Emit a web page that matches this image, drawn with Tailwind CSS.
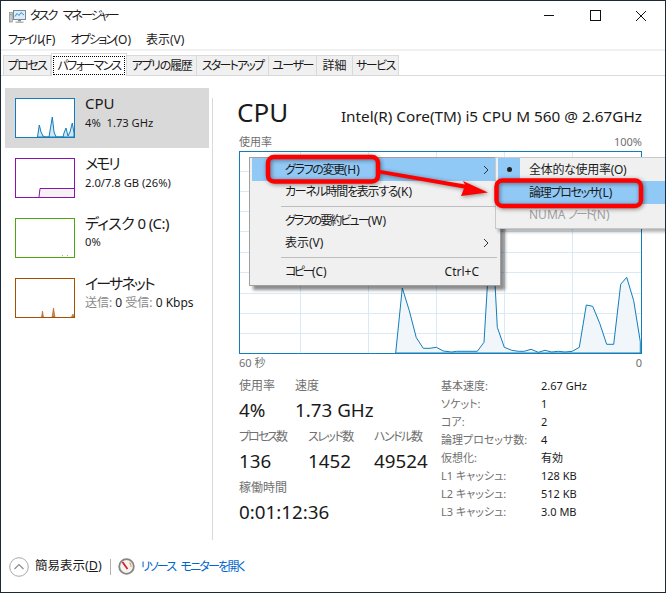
<!DOCTYPE html>
<html lang="ja">
<head>
  <meta charset="UTF-8" />
  <title>タスク マネージャー</title>
  <script src="https://cdn.jsdelivr.net/npm/@tailwindcss/browser@4"></script>
</head>
<body class="bg-white overflow-hidden">
  <div class="relative w-[666px] h-[593px] overflow-hidden bg-white border border-[#1c2a38] text-[12px] text-[#1a1a1a] font-['Noto_Sans','Noto_Sans_CJK_JP',sans-serif] [font-feature-settings:'palt']">

    <!-- title bar -->
    <header class="h-[29px] flex items-center pl-[8px]">
      <svg class="w-[17px] h-[17px]" viewBox="0 0 17 17">
        <rect x="0.5" y="5.500" width="2.800" height="9.500" fill="#c9c9c9" stroke="#8a8a8a" stroke-width="0.7"/>
        <rect x="1.300" y="7" width="1.200" height="1.200" fill="#5fb04a"/>
        <rect x="4.500" y="3.500" width="12" height="9" fill="#dcecfa" stroke="#7d8a96"/>
        <path d="M6 9.500l2-3 2 2 2-3 3 2.500" fill="none" stroke="#3b8ed0"/>
        <rect x="9" y="13" width="3" height="1.500" fill="#8a8a8a"/><rect x="6.500" y="14.500" width="8" height="1.500" fill="#b5b5b5"/>
      </svg>
      <span class="ml-[4px] tracking-[-1.900px] [word-spacing:5px]">タスク マネージャー</span>
      <div class="ml-auto flex items-center">
        <svg class="w-[46px] h-[29px]" viewBox="0 0 46 29"><path d="M18 14.5h10" stroke="#111"/></svg>
        <svg class="w-[46px] h-[29px]" viewBox="0 0 46 29"><rect x="18.5" y="9.5" width="10" height="10" fill="none" stroke="#111"/></svg>
        <svg class="w-[46px] h-[29px] mr-[1px]" viewBox="0 0 46 29"><path d="M18 10l10 10M28 10l-10 10" stroke="#111"/></svg>
      </div>
    </header>

    <!-- menu bar -->
    <nav class="h-[19px] flex items-center pl-[7px] gap-[15px]">
      <span><span class="tracking-[-1.900px]">ファイル</span>(F)</span><span><span class="tracking-[-1.750px]">オプション</span>(O)</span><span>表示(V)</span>
    </nav>
    <div class="h-[2px] bg-[#f0f0f0]"></div>

    <!-- tabs -->
    <div class="relative h-[25px] flex items-end pl-[2px] border-b border-[#d9d9d9] whitespace-nowrap">
      <div class="h-[20px] w-[48px] flex items-center justify-center bg-[#f0f0f0] border border-b-0 border-[#d9d9d9] tracking-[-1.500px]">プロセス</div>
      <div class="relative z-10 -mb-[1px] h-[23px] w-[76px] flex items-center justify-center bg-white border border-b-0 border-[#d9d9d9]">
        <span class="w-[72px] text-center leading-[19px] outline-1 outline-dotted outline-black -outline-offset-1 tracking-[-1.600px]">パフォーマンス</span>
      </div>
      <div class="h-[20px] w-[70px] flex items-center justify-center bg-[#f0f0f0] border border-l-0 border-b-0 border-[#d9d9d9] tracking-[-1.300px]">アプリの履歴</div>
      <div class="h-[20px] w-[72px] flex items-center justify-center bg-[#f0f0f0] border border-l-0 border-b-0 border-[#d9d9d9] tracking-[-1.800px]">スタートアップ</div>
      <div class="h-[20px] w-[48px] flex items-center justify-center bg-[#f0f0f0] border border-l-0 border-b-0 border-[#d9d9d9] tracking-[-1.500px]">ユーザー</div>
      <div class="h-[20px] w-[36px] flex items-center justify-center bg-[#f0f0f0] border border-l-0 border-b-0 border-[#d9d9d9]">詳細</div>
      <div class="h-[20px] w-[46px] flex items-center justify-center bg-[#f0f0f0] border border-l-0 border-b-0 border-[#d9d9d9] tracking-[-1.500px]">サービス</div>
    </div>

    <div class="h-[464px] flex">
      <!-- sidebar -->
      <aside class="w-[211px] pt-[12px] pl-[4px] shrink-0">
        <div class="w-[204px] h-[60px] flex items-start pt-[10px] bg-[#d9d9d9] pl-[10px]">
          <svg class="w-[60px] h-[40px] bg-white border border-[#117dbb]" viewBox="0 0 58 38">
            <path d="M21.500 38L23.300 26 25 33 27 37 29 38H33L36.300 18 38 33 40 38H47L48 34 50 29 52 37 54 33 56.300 24 58 34V38z" fill="#d3e7f4" stroke="#117dbb" stroke-width="1"/>
          </svg>
          <div class="ml-[10px] -mt-[5px]">
            <div class="text-[15px] leading-[21px]">CPU</div>
            <div class="leading-[18px] text-[11.200px]">4%&nbsp; 1.73 GHz</div>
          </div>
        </div>
        <div class="w-[204px] h-[60px] flex items-start pt-[10px] pl-[10px]">
          <svg class="w-[60px] h-[40px] bg-white border border-[#8b12ae]" viewBox="0 0 58 38">
            <path d="M23 38l1-9h34v9z" fill="#f4f2f4"/>
            <path d="M23 38l1-8.500h34" fill="none" stroke="#8b12ae" stroke-width="1"/>
          </svg>
          <div class="ml-[10px] -mt-[5px]">
            <div class="text-[15px] leading-[21px] tracking-[-2px]">メモリ</div>
            <div class="leading-[18px] text-[11.200px]">2.0/7.8 GB (26%)</div>
          </div>
        </div>
        <div class="w-[204px] h-[60px] flex items-start pt-[10px] pl-[10px]">
          <svg class="w-[60px] h-[40px] bg-white border border-[#4da60c]" viewBox="0 0 58 38">
            <path d="M46 36.500h1M51 36.500h1" stroke="#a8a8a8"/>
          </svg>
          <div class="ml-[10px] -mt-[5px]">
            <div class="text-[15px] leading-[21px] tracking-[-0.600px]">ディスク 0 (C:)</div>
            <div class="leading-[16px] text-[11.200px]">0%</div>
          </div>
        </div>
        <div class="w-[204px] h-[60px] flex items-start pt-[10px] pl-[10px]">
          <svg class="w-[60px] h-[40px] bg-white border border-[#a74f01]" viewBox="0 0 58 38">
            <path d="M25.500 38l1-6 1 6zM36 38l1.500-9 1.500 9zM55.500 38l1.500-3 1 3z" fill="#c98a55" stroke="#a74f01" stroke-width="0.5"/>
          </svg>
          <div class="ml-[10px] -mt-[5px]">
            <div class="text-[15px] leading-[21px] tracking-[-1.800px]">イーサネット</div>
            <div class="leading-[18px]"><span class="text-[#8a8a8a]">送信:</span> 0 <span class="text-[#8a8a8a]">受信:</span> 0 Kbps</div>
          </div>
        </div>
      </aside>

      <!-- main panel -->
      <main class="mt-[22px] h-[442px] flex-1 border-l border-[#d9d9d9] pl-[25px] pr-[24px]">
        <div class="h-[36px] flex items-center justify-between -mt-[1px] mb-[1px]">
          <h1 class="text-[26px] leading-[32px] -mt-[6px] -ml-[1px]">CPU</h1>
          <div class="text-[15.300px] mt-[3px]">Intel(R) Core(TM) i5 CPU M 560 @ 2.67GHz</div>
        </div>
        <div class="h-[17px] flex items-center justify-between text-[11px] text-[#707070] pl-[1px]"><span>使用率</span><span>100%</span></div>

        <svg class="block w-[403px] h-[203px] ml-[1px]" viewBox="239 151 403 203">
          <rect x="239.500" y="151.500" width="402" height="202" fill="#fff"/>
          <path d="M300.500 152v201M368.500 152v201M436.500 152v201M504.500 152v201M572.500 152v201M240 171.500h401M240 191.500h401M240 211.500h401M240 231.500h401M240 252.500h401M240 272.500h401M240 293.500h401M240 313.500h401M240 333.500h401" stroke="#d9eaf4" fill="none"/>
          <path d="M395.700 353L402.300 288 409.300 310.700 416.300 337.700 423.300 348.300 430 348.300 436.300 347.300 443.300 351 451.700 352 456.700 351.300 477.300 351.300 484 342.300 488.300 270 494.300 270 497.300 327.300 504.300 347.300 511.700 350.300 518.300 351.300 524.300 351.300 531 349.300 538.300 352.300 545 350.300 551.700 352 558.300 351.300 565 352 572.300 351.300 579.300 347.300 586.300 305 592.700 306.300 599.700 323.300 606.700 344.300 613.700 344.300 620.700 284.300 626.700 277.300 633.700 300.700 640.300 341.700V353z" fill="#f1f6fa" stroke="#117dbb" stroke-width="1"/>
          <rect x="239.500" y="151.500" width="402" height="202" fill="none" stroke="#117dbb"/>
        </svg>
        <div class="h-[18px] flex items-center justify-between text-[11px] text-[#707070] pl-[1px]"><span>60 秒</span><span>0</span></div>

        <div class="mt-[5px] flex">
          <div class="w-[203px] shrink-0 pl-[1px]">
            <div class="flex">
              <div class="w-[56px]"><div class="h-[18px] leading-[18px] text-[#707070]">使用率</div><div class="mt-[2px] h-[26px] leading-[26px] text-[18.800px]">4%</div></div>
              <div><div class="h-[18px] leading-[18px] text-[#707070]">速度</div><div class="mt-[2px] h-[26px] leading-[26px] text-[18.800px]">1.73 GHz</div></div>
            </div>
            <div class="mt-[5px] flex">
              <div class="w-[69px]"><div class="h-[18px] leading-[18px] text-[#707070] tracking-[-2px]">プロセス数</div><div class="mt-[2px] h-[26px] leading-[26px] text-[18.800px]">136</div></div>
              <div class="w-[66px]"><div class="h-[18px] leading-[18px] text-[#707070] tracking-[-1.500px]">スレッド数</div><div class="mt-[2px] h-[26px] leading-[26px] text-[18.800px]">1452</div></div>
              <div><div class="h-[18px] leading-[18px] text-[#707070] tracking-[-1.500px]">ハンドル数</div><div class="mt-[2px] h-[26px] leading-[26px] text-[18.800px]">49524</div></div>
            </div>
            <div class="mt-[5px]"><div class="h-[18px] leading-[18px] text-[#707070]">稼働時間</div><div class="mt-[2px] h-[26px] leading-[26px] text-[18.800px]">0:01:12:36</div></div>
          </div>
          <div class="grid grid-cols-[100px_auto] auto-rows-[18px] leading-[18px] text-[11px]">
            <span class="text-[#707070]">基本速度:</span><span>2.67 GHz</span>
            <span class="text-[#707070]">ソケット:</span><span>1</span>
            <span class="text-[#707070]">コア:</span><span>2</span>
            <span class="text-[#707070]">論理プロセッサ数:</span><span>4</span>
            <span class="text-[#707070]">仮想化:</span><span>有効</span>
            <span class="text-[#707070]">L1 キャッシュ:</span><span>128 KB</span>
            <span class="text-[#707070]">L2 キャッシュ:</span><span>512 KB</span>
            <span class="text-[#707070]">L3 キャッシュ:</span><span>3.0 MB</span>
          </div>
        </div>
      </main>
    </div>

    <!-- footer -->
    <footer class="h-[52px] flex items-center pl-[8px] pt-[1px]">
      <svg class="w-[20px] h-[20px]" viewBox="0 0 20 20"><circle cx="10" cy="10" r="9.300" fill="#fff" stroke="#a8a8a8"/><path d="M5.500 12l4.500-4.500 4.500 4.500" fill="none" stroke="#8c8c8c" stroke-width="1.200"/></svg>
      <span class="ml-[6px] text-[12.500px]">簡易表示(<u>D</u>)</span>
      <span class="ml-[8px] w-px h-[16px] bg-[#b0b0b0]"></span>
      <svg class="ml-[7px] w-[17px] h-[17px]" viewBox="0 0 17 17"><circle cx="8.500" cy="8.500" r="7.300" fill="#f6f3ee" stroke="#858585" stroke-width="1.800"/><path d="M11.500 4.500a5 5 0 0 1 1.500 4.500" fill="none" stroke="#d9a06b" stroke-width="1.200"/><path d="M4.500 4l5 7" stroke="#cc1f28" stroke-width="1.700"/></svg>
      <a class="ml-[6px] text-[#0066cc] tracking-[-1.800px] [word-spacing:4px]">リソース モニターを開く</a>
    </footer>

    <!-- context menu -->
    <div class="absolute left-[248px] top-[156px] w-[252px] h-[129px] bg-[#f0f0f0] border border-[#a0a0a0] px-[1px] shadow-[4px_4px_3px_rgba(0,0,0,0.45)]">
      <div class="h-[23px] mx-[1px] flex items-center justify-between pl-[33px] pr-[9px] bg-[#90c8f6]">
        <span><span class="tracking-[-1.350px]">グラフの変更</span>(H)</span>
        <svg class="w-[6px] h-[10px]" viewBox="0 0 6 10"><path d="M1 1l4 4-4 4" fill="none" stroke="#333"/></svg>
      </div>
      <div class="h-[22px] flex items-center pl-[34px]"><span class="tracking-[-1.270px]">カーネル時間を表示する</span>(K)</div>
      <div class="h-px my-[3px] ml-[30px] mr-[2px] bg-[#bdbdbd]"></div>
      <div class="h-[22px] flex items-center pl-[34px]"><span class="tracking-[-1.900px]">グラフの要約ビュー</span>(W)</div>
      <div class="h-[22px] flex items-center justify-between pl-[34px] pr-[10px]">
        <span>表示(V)</span>
        <svg class="w-[6px] h-[10px]" viewBox="0 0 6 10"><path d="M1 1l4 4-4 4" fill="none" stroke="#333"/></svg>
      </div>
      <div class="h-px my-[3px] ml-[30px] mr-[2px] bg-[#bdbdbd]"></div>
      <div class="h-[22px] flex items-center justify-between pl-[34px] pr-[20px]"><span><span class="tracking-[-2.500px]">コピー</span>(C)</span><span>Ctrl+C</span></div>
    </div>

    <!-- submenu -->
    <div class="absolute left-[494px] top-[156px] w-[175px] h-[72px] bg-[#f0f0f0] border border-[#c8c8c8] px-[1px] shadow-[3px_3px_3px_rgba(0,0,0,0.3)]">
      <div class="h-[23px] flex items-center">
        <div class="w-[22px] h-full ml-[1px] flex items-center justify-center bg-[#90c8f6]"><span class="w-[5px] h-[5px] rounded-full bg-[#222]"></span></div>
        <span class="ml-[9px] tracking-[-0.300px]">全体的な使用率(O)</span>
      </div>
      <div class="h-[23px] flex items-center pl-[32px] bg-[#90c8f6]"><span class="tracking-[-1.300px]">論理プロセッサ</span>(L)</div>
      <div class="h-[22px] flex items-center pl-[32px] text-[#a0a0a0]">NUMA <span class="ml-[3px] tracking-[-2px]">ノード</span>(N)</div>
    </div>

    <!-- red annotation -->
    <svg class="absolute left-0 top-0 w-[664px] h-[591px] pointer-events-none drop-shadow-[1px_1px_2px_rgba(0,0,0,0.45)]" viewBox="1 1 664 591">
      <rect x="268" y="157" width="110" height="24.500" rx="6" fill="none" stroke="#f00" stroke-width="4.500"/>
      <rect x="496.500" y="180.500" width="144.500" height="25.500" rx="6" fill="none" stroke="#f00" stroke-width="4.500"/>
      <path d="M380 170L465 184.500 463 181 488 192.500 461 196 464 188.500 379 173.500z" fill="#f00"/>
    </svg>
  </div>
</body>
</html>
